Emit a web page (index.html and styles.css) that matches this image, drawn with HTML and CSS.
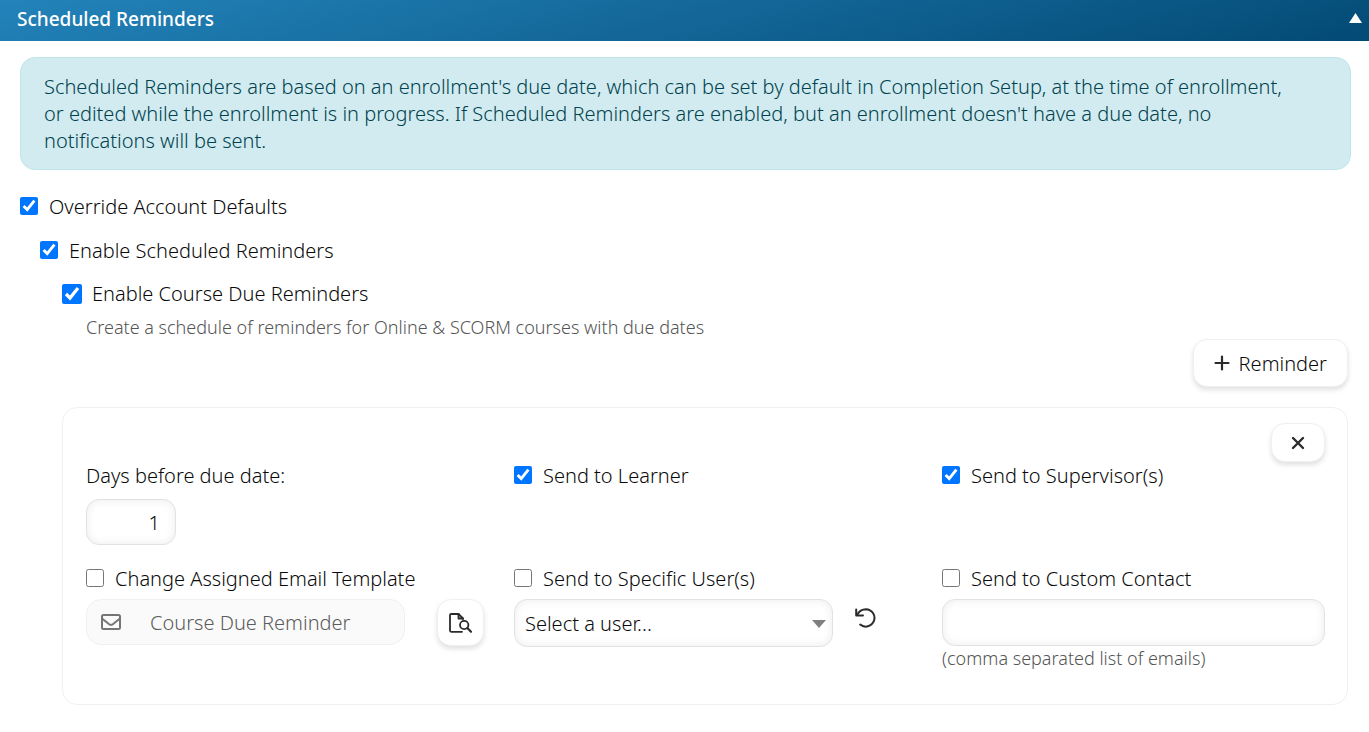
FILE: index.html
```html
<!DOCTYPE html>
<html lang="en">
<head>
  <meta charset="UTF-8" />
  <meta name="viewport" content="width=device-width, initial-scale=1.0"/>
  <title>Scheduled Reminders</title>
  <link rel="stylesheet" href="styles.css">
</head>
<body>

  <header class="panel-header">
    <h1>Scheduled Reminders</h1>
    <svg class="arrow-up" viewBox="0 0 13 10" width="13" height="10"><path d="M6.5 0L13 10H0z" fill="#fff"/></svg>
  </header>

  <main class="panel-body">
    <div class="info">
      Scheduled Reminders are based on an enrollment's due date, which can be set by default in Completion Setup, at the time of enrollment, or edited while the enrollment is in progress. If Scheduled Reminders are enabled, but an enrollment doesn't have a due date, no notifications will be sent.
    </div>

    <label class="check"><input type="checkbox" checked>Override Account Defaults</label>

    <div class="level-2">
      <label class="check"><input type="checkbox" checked>Enable Scheduled Reminders</label>

      <div class="level-3">
        <label class="check check-large"><input type="checkbox" checked>Enable Course Due Reminders</label>
        <p class="hint">Create a schedule of reminders for Online &amp; SCORM courses with due dates</p>

        <div class="toolbar">
          <button type="button" class="btn btn-add">
            <svg viewBox="0 0 16 16" width="16" height="16" fill="none" stroke="#2b2b2b" stroke-width="2.200" stroke-linecap="round"><path d="M8 1.500v13M1.500 8h13"/></svg>
            Reminder
          </button>
        </div>

        <section class="card">
          <div class="card-top">
            <button type="button" class="btn btn-close" aria-label="Remove reminder">
              <svg viewBox="0 0 14 14" width="14" height="14" fill="none" stroke="#2b2b2b" stroke-width="2.400" stroke-linecap="round"><path d="M2 2l10 10M12 2L2 12"/></svg>
            </button>
          </div>

          <div class="row">
            <div>
              <label class="label" for="days">Days before due date:</label>
              <input type="text" inputmode="numeric" id="days" class="field days" value="1">
            </div>
            <div>
              <label class="check"><input type="checkbox" checked>Send to Learner</label>
            </div>
            <div>
              <label class="check"><input type="checkbox" checked>Send to Supervisor(s)</label>
            </div>
          </div>

          <div class="row">
            <div>
              <label class="check"><input type="checkbox">Change Assigned Email Template</label>
              <div class="control">
                <button type="button" class="template" disabled>
                  <svg viewBox="0 0 20 16" width="20" height="16" fill="none" stroke="#757575" stroke-width="2" stroke-linejoin="round"><rect x="1" y="1" width="18" height="14" rx="1.500"/><path d="M1 4.500l7.200 5.700q1.800 1.300 3.600 0L19 4.500"/></svg>
                  <span>Course Due Reminder</span>
                </button>
                <button type="button" class="btn btn-preview" aria-label="Preview template">
                  <svg viewBox="0 0 23 20" width="23" height="20" fill="none" stroke="#2b2b2b" stroke-width="1.800" stroke-linecap="round" stroke-linejoin="round"><path d="M13 18.800H2.200Q1 18.800 1 17.600V2.200Q1 1 2.200 1H9.500L14 5.500V6"/><path d="M9.500 1V5.500H14"/><circle cx="15.200" cy="12" r="4.200"/><path d="M18.300 15l3.700 3.700" stroke-width="2.200"/></svg>
                </button>
              </div>
            </div>
            <div>
              <label class="check"><input type="checkbox">Send to Specific User(s)</label>
              <div class="control">
                <div class="select">
                  <select class="field" aria-label="User">
                    <option>Select a user...</option>
                  </select>
                  <svg class="caret" viewBox="0 0 14 8" width="14" height="8"><path d="M0 0h14L7 8z" fill="#808080"/></svg>
                </div>
                <button type="button" class="btn-reset" aria-label="Reset">
                  <svg viewBox="0 0 21 20" width="21" height="20" fill="none" stroke="#2b2b2b" stroke-width="2" stroke-linecap="round" stroke-linejoin="round"><path d="M1.200 1.500V7.500H8"/><path d="M2 7C4 3.200 7.200 1.200 11 1.200a8.700 8.700 0 1 1-5.800 15.400"/></svg>
                </button>
              </div>
            </div>
            <div>
              <label class="check"><input type="checkbox">Send to Custom Contact</label>
              <div class="control">
                <input type="text" class="field" aria-label="Custom contact emails">
              </div>
              <p class="hint">(comma separated list of emails)</p>
            </div>
          </div>
        </section>
      </div>
    </div>
  </main>

</body>
</html>
```

FILE: styles.css
```css
* {
  box-sizing: border-box;
}

body {
  margin: 0;
  background: #fff;
  color: #0a0a0a;
  font-family: "Noto Sans", sans-serif;
  font-size: 20px;
  font-weight: 300;
  line-height: 27px;
}

button, input, select {
  font: inherit;
  color: inherit;
}

svg {
  flex: none;
}

.panel-header {
  display: flex;
  align-items: flex-start;
  justify-content: space-between;
  padding: 6px 7px 8px 17px;
  background: linear-gradient(165deg, #2383ba, #034a75);
  color: #fff;
}

.panel-header h1 {
  margin: 0;
  font-size: 19px;
  font-weight: 500;
}

.arrow-up {
  margin-top: 7px;
}

.panel-body {
  padding: 16px 21px 27px 20px;
}

.info {
  margin: 0 -3px 23px 0;
  padding: 15px 55px 15px 23px;
  border: 1px solid #bee5eb;
  border-radius: 15px;
  background: #d1ebf0;
  color: #00424d;
}

.check {
  display: flex;
  align-items: center;
  gap: 11px;
}

.check input {
  flex: none;
  width: 18px;
  height: 18px;
  margin: 0 0 2px;
  accent-color: #0075ff;
}

.check-large {
  gap: 10px;
}

.check-large input {
  width: 20px;
  height: 20px;
  margin: 0;
}

.level-2 {
  margin-top: 17px;
  padding-left: 20px;
}

.level-3 {
  margin-top: 16px;
  padding-left: 22px;
}

.hint {
  margin: 0;
  color: #555;
  font-size: 18px;
  line-height: 25px;
}

.level-3 > .hint {
  margin: 8px 0 0 24px;
}

.toolbar {
  display: flex;
  justify-content: flex-end;
  margin-top: -1px;
}

.btn {
  display: flex;
  align-items: center;
  justify-content: center;
  padding: 0;
  border: 1px solid #f0f0f0;
  border-radius: 14px;
  background: #fff;
  box-shadow: 0 3px 5px rgba(0, 0, 0, 0.12);
  cursor: pointer;
}

.btn-add {
  gap: 9px;
  height: 48px;
  padding: 0 20px;
}

.btn-close {
  width: 54px;
  height: 39px;
}

.btn-preview {
  width: 47px;
  height: 47px;
}

.card {
  margin-top: 20px;
  padding: 15px 22px 33px 23px;
  border: 1px solid #f0f0f0;
  border-radius: 15px;
}

.card-top {
  display: flex;
  justify-content: flex-end;
}

.row {
  display: grid;
  grid-template-columns: repeat(3, 1fr);
  gap: 45px;
}

.row + .row {
  margin-top: 20px;
}

.label {
  display: block;
}

.field {
  display: block;
  width: 100%;
  height: 47px;
  padding: 0 10px;
  border: 1px solid #e2e2e2;
  border-radius: 13px;
  background: #fff;
  box-shadow: inset 0 0 10px rgba(0, 0, 0, 0.08);
}

.days {
  width: 90px;
  height: 46px;
  margin-top: 10px;
  padding: 0 15px;
  text-align: right;
}

.control {
  display: flex;
  align-items: flex-start;
  margin-top: 7px;
}

.template {
  display: flex;
  flex: 0 1 319px;
  align-items: center;
  gap: 29px;
  height: 46px;
  margin-right: 32px;
  padding: 0 14px;
  border: 1px solid #f0f0f0;
  border-radius: 15px;
  background: #fafafa;
  color: #5c5c5c;
}

.control .btn-preview {
  flex: none;
  margin-right: -15px;
}

.select {
  position: relative;
  flex: 1;
  margin-right: 22px;
}

.select select {
  height: 48px;
  padding-top: 1px;
  margin-bottom: -1px;
  appearance: none;
}

/* arrow lies over the select box */
.caret {
  position: absolute;
  top: 21px;
  right: 7px;
  pointer-events: none;
}

.btn-reset {
  display: flex;
  margin-right: 21px;
  padding: 9px 0;
  border: 0;
  background: none;
  cursor: pointer;
}
```
